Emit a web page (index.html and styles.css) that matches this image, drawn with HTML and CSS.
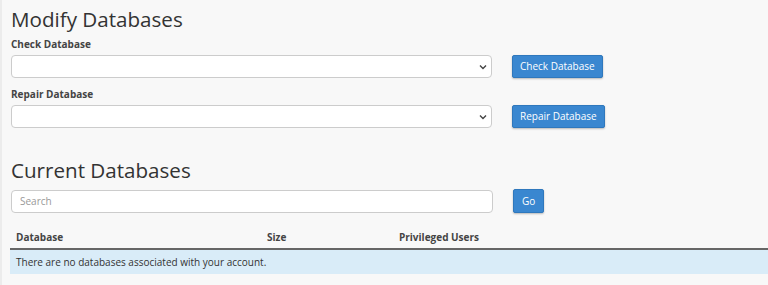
FILE: index.html
```html
<!DOCTYPE html>
<html>
<head>
<meta charset="utf-8">
<link rel="stylesheet" href="styles.css">
</head>
<body>
<div class="page">
  <h1 class="title">Modify Databases</h1>
  <div class="field">
    <label class="label">Check Database</label>
    <div class="row">
      <div class="select"><svg class="chev" width="8" height="6" viewBox="0 0 8 6"><path d="M1 1.5 L4 4.5 L7 1.5" fill="none" stroke="#444" stroke-width="1.4"/></svg></div>
      <button class="btn">Check Database</button>
    </div>
  </div>
  <div class="field">
    <label class="label">Repair Database</label>
    <div class="row">
      <div class="select"><svg class="chev" width="8" height="6" viewBox="0 0 8 6"><path d="M1 1.5 L4 4.5 L7 1.5" fill="none" stroke="#444" stroke-width="1.4"/></svg></div>
      <button class="btn">Repair Database</button>
    </div>
  </div>
  <h1 class="title title2">Current Databases</h1>
  <div class="row">
    <div class="search">Search</div>
    <button class="btn btn-go">Go</button>
  </div>
  <div class="table">
    <div class="thead">
      <div class="th c1">Database</div>
      <div class="th c2">Size</div>
      <div class="th c3">Privileged Users</div>
    </div>
    <div class="empty">There are no databases associated with your account.</div>
  </div>
</div>
</body>
</html>
```

FILE: styles.css
```css
html, body {
  margin: 0;
  padding: 0;
  background: #f8f8f8;
}
body {
  font-family: "Open Sans", "Liberation Sans", sans-serif;
  color: #333;
  border-left: 2px solid #ececec;
  min-height: 285px;
  box-sizing: border-box;
}
.page {
  padding: 5px 0 0 9px;
}
.title {
  font-size: 20.6px;
  font-weight: 400;
  line-height: 28px;
  margin: 0 0 4px 0;
  color: #333;
}
.title2 {
  margin-top: 28px;
  margin-bottom: 5px;
}
.field {
  margin-bottom: 9px;
}
.label {
  display: block;
  font-size: 10px;
  font-weight: 700;
  line-height: 14px;
  margin-bottom: 4px;
  color: #444;
}
.row {
  display: flex;
  align-items: center;
  gap: 20px;
}
.select, .search {
  width: 481px;
  height: 23px;
  box-sizing: border-box;
  background: #fff;
  border: 1px solid #ccc;
  border-radius: 4px;
  position: relative;
}
.chev {
  position: absolute;
  right: 4px;
  top: 8px;
}
.search {
  font-size: 10px;
  color: #999;
  line-height: 21px;
  padding-left: 8px;
  width: 482px;
}
.btn {
  font-family: "Open Sans", "Liberation Sans", sans-serif;
  font-size: 10px;
  color: #fff;
  background: #3a87d0;
  border: 1px solid #2f78bd;
  border-radius: 2px;
  height: 23px;
  padding: 0 7px;
  box-shadow: 0 1px 2px rgba(0,0,0,0.25);
  line-height: 21px;
}
.btn-go {
  height: 24px;
  padding: 0 8px;
}
.table {
  margin-top: 12px;
  margin-left: -1px;
}
.thead {
  display: flex;
  border-bottom: 2px solid #666;
  height: 23px;
  align-items: center;
  font-size: 10px;
  font-weight: 700;
  color: #444;
}
.th {
  padding-left: 6px;
}
.c1 { width: 245px; }
.c2 { width: 126px; }
.empty {
  background: #d9ecf8;
  font-size: 10px;
  line-height: 24px;
  padding-left: 6px;
  color: #333;
}
```
